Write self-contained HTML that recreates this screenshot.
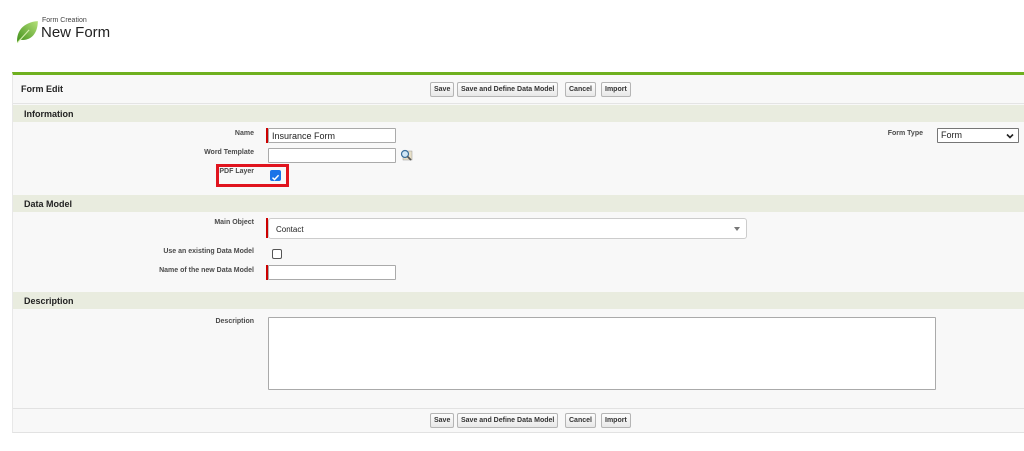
<!DOCTYPE html>
<html><head><meta charset="utf-8"><style>
*{box-sizing:border-box;margin:0;padding:0}
body{width:1024px;height:451px;background:#fff;font-family:"Liberation Sans",Arial,sans-serif;position:relative;overflow:hidden;color:#222}
.a{position:absolute}
.panel{left:12px;top:72px;width:1012px;height:361px;background:#f8f8f8;border-top:3px solid #6fb01f;border-bottom:1px solid #e2e2e2;border-left:1px solid #e8e8e8}
.bar{left:13px;width:1011px;height:17px;background:#e9ecdf;font-size:9px;font-weight:bold;padding:4px 0 0 11px;color:#222}
.lbl{font-size:7px;font-weight:bold;color:#4a4a4a;text-align:right;width:240px}
.inp{background:#fff;border:1px solid #aaa;border-radius:1px}
.req{width:2px;background:#c00}
.btn{font-size:7px;font-weight:bold;color:#333;background:linear-gradient(#fdfdfd,#e8e8e8);border:1px solid #b5b5b5;border-radius:2px;height:15px;line-height:13px;padding:0 3px;top:0}
.cb{width:10px;height:10px;border:1px solid #555;border-radius:2px;background:#fff}
</style></head><body>
<svg class="a" style="left:14px;top:19px" width="26" height="26" viewBox="0 0 24 24"><defs><linearGradient id="g" x1="0" y1="1" x2="1" y2="0"><stop offset="0" stop-color="#3f8f18"/><stop offset="1" stop-color="#b5e07a"/></linearGradient></defs><path d="M3 22 C2 12 8 3 22 2 C22 14 15 21 5 19 Z" fill="url(#g)"/><path d="M3 22 L14 10" stroke="#d8f0b0" stroke-width="1" fill="none"/></svg>
<div class="a" style="left:42px;top:17px;font-size:7px;color:#444">Form Creation</div>
<div class="a" style="left:41px;top:24px;font-size:15px;color:#222">New Form</div>

<div class="a panel"></div>
<div class="a" style="left:21px;top:84px;font-size:9px;font-weight:bold;color:#222">Form Edit</div>
<div class="a" style="left:13px;top:103px;width:1011px;border-top:1px solid #e4e4e4"></div>
<div class="a" style="left:430px;top:82px;height:15px;width:210px">
<span class="a btn" style="left:0">Save</span><span class="a btn" style="left:27px">Save and Define Data Model</span><span class="a btn" style="left:135px">Cancel</span><span class="a btn" style="left:171px">Import</span></div>

<div class="a bar" style="top:105px">Information</div>
<div class="a lbl" style="left:14px;top:130px">Name</div>
<div class="a req" style="left:266px;top:128px;height:15px"></div>
<div class="a inp" style="left:268px;top:128px;width:128px;height:15px;font-size:9px;padding:2px 3px">Insurance Form</div>
<div class="a lbl" style="left:14px;top:149px">Word Template</div>
<div class="a inp" style="left:268px;top:148px;width:128px;height:15px"></div>
<svg class="a" style="left:400px;top:149px" width="13" height="12" viewBox="0 0 13 12"><rect x="3" y="2" width="9" height="9" fill="#e8e0c8" stroke="#999" stroke-width=".5"/><circle cx="5" cy="5" r="3.5" fill="#cfe6f5" stroke="#3a6e9a" stroke-width="1.2"/><path d="M7.5 7.5 L11 11" stroke="#555" stroke-width="1.6"/></svg>
<div class="a lbl" style="left:14px;top:168px">PDF Layer</div>
<div class="a" style="left:270px;top:170px;width:11px;height:11px;background:#1a73e8;border-radius:2px"><svg width="11" height="11" viewBox="0 0 11 11"><path d="M2.5 5.6 L4.5 7.6 L8.6 3.2" stroke="#fff" stroke-width="1.5" fill="none"/></svg></div>
<div class="a" style="left:216px;top:164px;width:73px;height:23px;border:3px solid #e0141e"></div>
<div class="a lbl" style="left:683px;top:130px">Form Type</div>
<div class="a inp" style="left:937px;top:128px;width:82px;height:15px;border-color:#767676;font-size:9px;padding:1px 3px">Form<svg class="a" style="right:4px;top:4px" width="8" height="6" viewBox="0 0 8 6"><path d="M1 1.5 L4 4.5 L7 1.5" stroke="#222" stroke-width="1.6" fill="none"/></svg></div>

<div class="a bar" style="top:195px">Data Model</div>
<div class="a lbl" style="left:14px;top:219px">Main Object</div>
<div class="a req" style="left:266px;top:218px;height:20px"></div>
<div class="a inp" style="left:268px;top:218px;width:479px;height:21px;border-color:#ccc;border-radius:3px;font-size:8px;padding:6px 7px">Contact<span class="a" style="right:6px;top:8px;width:0;height:0;border-left:3px solid transparent;border-right:3px solid transparent;border-top:4px solid #777"></span></div>
<div class="a lbl" style="left:14px;top:248px">Use an existing Data Model</div>
<div class="a cb" style="left:272px;top:249px"></div>
<div class="a lbl" style="left:14px;top:267px">Name of the new Data Model</div>
<div class="a req" style="left:266px;top:265px;height:15px"></div>
<div class="a inp" style="left:268px;top:265px;width:128px;height:15px"></div>

<div class="a bar" style="top:292px">Description</div>
<div class="a lbl" style="left:14px;top:318px">Description</div>
<div class="a inp" style="left:268px;top:317px;width:668px;height:73px"></div>
<div class="a" style="left:13px;top:408px;width:1011px;border-top:1px solid #e2e2e2"></div>
<div class="a" style="left:430px;top:413px;height:15px;width:210px">
<span class="a btn" style="left:0">Save</span><span class="a btn" style="left:27px">Save and Define Data Model</span><span class="a btn" style="left:135px">Cancel</span><span class="a btn" style="left:171px">Import</span></div>
</body></html>
